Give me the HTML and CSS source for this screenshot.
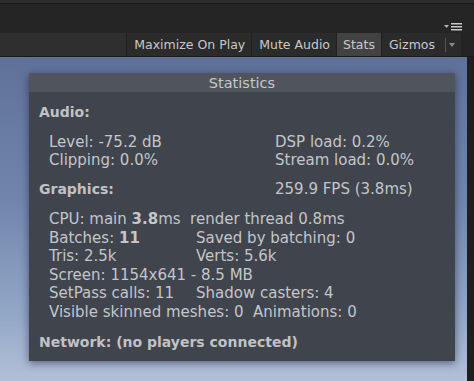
FILE: index.html
```html
<!DOCTYPE html>
<html>
<head>
<meta charset="utf-8">
<link rel="stylesheet" href="styles.css">
</head>
<body>
<div class="app">
  <div class="topbar">
    <div class="topline"></div>
    <div class="menuicon">
      <svg width="20" height="8" viewBox="0 0 20 8">
        <path d="M0 2 L5 2 L2.5 5 Z" fill="#b5b5b5"/>
        <rect x="7" y="0" width="11" height="1.5" fill="#c8c8c8"/>
        <rect x="7" y="3" width="11" height="1.5" fill="#c8c8c8"/>
        <rect x="7" y="6" width="11" height="1.5" fill="#c8c8c8"/>
      </svg>
    </div>
  </div>
  <div class="toolbar">
    <div class="spacer"></div>
    <div class="btn">Maximize On Play</div>
    <div class="btn">Mute Audio</div>
    <div class="btn active">Stats</div>
    <div class="btn gizmos">Gizmos<span class="sep"></span><span class="caret"></span></div>
    <div class="tail"></div>
  </div>
  <div class="main">
    <div class="viewport">
      <div class="panel">
        <div class="header">Statistics</div>
        <div class="body">
          <div class="section">Audio:</div>
          <div class="grid audio">
            <div>Level: -75.2 dB</div><div>DSP load: 0.2%</div>
            <div>Clipping: 0.0%</div><div>Stream load: 0.0%</div>
          </div>
          <div class="gfxhead">
            <div class="section">Graphics:</div>
            <div class="fps">259.9 FPS (3.8ms)</div>
          </div>
          <div class="gfx">
            <div class="row">CPU: main <b>3.8</b>ms&nbsp; render thread 0.8ms</div>
            <div class="row two"><span>Batches: <b>11</b></span><span>Saved by batching: 0</span></div>
            <div class="row two"><span>Tris: 2.5k</span><span>Verts: 5.6k</span></div>
            <div class="row">Screen: 1154x641 - 8.5 MB</div>
            <div class="row two"><span>SetPass calls: 11</span><span>Shadow casters: 4</span></div>
            <div class="row">Visible skinned meshes: 0&nbsp; Animations: 0</div>
          </div>
          <div class="section net">Network: (no players connected)</div>
        </div>
      </div>
    </div>
    <div class="rightedge"></div>
  </div>
</div>
</body>
</html>
```
FILE: styles.css
```css
* { box-sizing: border-box; }
html, body { margin: 0; padding: 0; }
body {
  width: 474px;
  height: 381px;
  overflow: hidden;
  background: #232323;
  font-family: "DejaVu Sans", "Liberation Sans", sans-serif;
}
.app { display: flex; flex-direction: column; height: 381px; }
.topbar {
  height: 33px;
  background: #252525;
  display: flex;
  flex-direction: column;
}
.topline {
  height: 4px;
  background: #2c2c2c;
  border-bottom: 1px solid #1c1c1c;
}
.menuicon {
  align-self: flex-end;
  margin-top: 19px;
  margin-right: 10px;
  height: 8px;
  display: flex;
}
.toolbar {
  height: 24px;
  display: flex;
  background: #2f2f2f;
  border-bottom: 1px solid #1a1a1a;
  font-size: 12.5px;
  color: #c9c9c9;
}
.spacer { flex: 1; background: #2f2f2f; }
.btn {
  display: flex;
  align-items: center;
  padding: 0 6px 0 7px;
  background: #2b2b2b;
  border-left: 1px solid #202020;
  white-space: nowrap;
}
.btn.active { background: #424242; padding: 0 6px; }
.gizmos { padding: 0 4px 0 7px; }
.sep { width: 1px; height: 14px; background: #555; margin-left: 10px; }
.caret {
  width: 0; height: 0;
  border-left: 3.5px solid transparent;
  border-right: 3.5px solid transparent;
  border-top: 4px solid #8a8a8a;
  margin-left: 3px;
  margin-right: 2px;
}
.tail { width: 13px; background: #242424; }
.main { flex: 1; display: flex; }
.viewport {
  flex: 1;
  background: linear-gradient(180deg, #5f7198 0%, #7286ad 45%, #93a7c7 80%, #b2c1d8 100%);
  padding: 16px 12px 0 29px;
}
.rightedge { width: 7px; background: #1f1f1f; }
.panel {
  width: 426px;
  height: 288px;
  background: #40444c;
  box-shadow: 0 2px 8px rgba(20, 25, 40, 0.55);
  color: #c4c6ca;
}
.header {
  height: 19px;
  background: #50545c;
  text-align: center;
  font-size: 14.5px;
  line-height: 20px;
  color: #c6c8cc;
}
.body { padding: 11px 0 0 10px; font-size: 15px; }
.section { font-weight: bold; font-size: 14px; color: #c0c2c6; line-height: 18px; }
.grid {
  display: grid;
  grid-template-columns: 226px auto;
  padding-left: 10px;
  margin-top: 12px;
  line-height: 18px;
}
.gfxhead { display: flex; align-items: baseline; margin-top: 11px; line-height: 18px; }
.gfxhead .section { width: 236px; }
.gfx { padding-left: 10px; margin-top: 12px; }
.row { line-height: 18.6px; white-space: nowrap; }
.row.two span:first-child { display: inline-block; width: 147px; }
.net { margin-top: 11px; }
```
